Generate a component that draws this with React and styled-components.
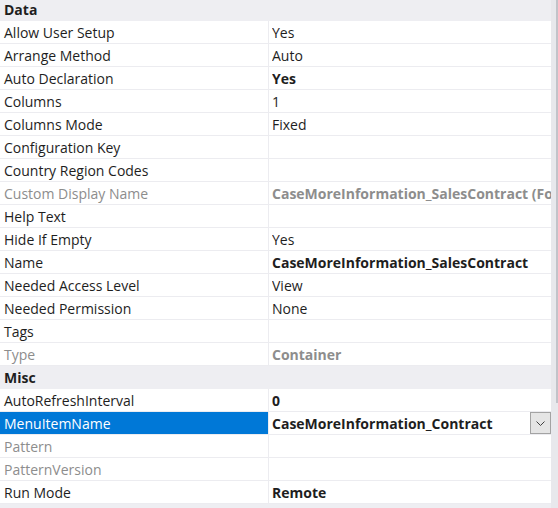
import React from "react";
import styled, { createGlobalStyle } from "styled-components";

const Global = createGlobalStyle`
  html, body { margin: 0; padding: 0; background: #ffffff; }
  body { font-family: "Open Sans", "Noto Sans", sans-serif; }
`;

const Frame = styled.div`
  width: 558px;
  height: 508px;
  overflow: hidden;
  display: flex;
  background: #eeeef2;
`;

const Grid = styled.div`
  width: 551px;
  display: flex;
  flex-direction: column;
  margin-top: -2px;
`;

const Scrollbar = styled.div`
  width: 7px;
  display: flex;
  justify-content: flex-end;
  background: #e8e8ec;
`;

const Thumb = styled.div`
  width: 2px;
  height: 403px;
  background: #c2c3c9;
`;

const Category = styled.div`
  height: 23px;
  display: flex;
  align-items: center;
  padding-left: 4px;
  background: #eeeef2;
  font-size: 14px;
  font-weight: 700;
  color: #1e1e1e;
`;

const Row = styled.div`
  height: 22px;
  display: grid;
  grid-template-columns: 269px 1fr;
  border-bottom: 1px solid #ececf0;
  background: #ffffff;
`;

const Label = styled.div`
  display: flex;
  align-items: center;
  padding-left: 4px;
  font-size: 14px;
  white-space: nowrap;
  overflow: hidden;
  color: ${(p) => (p.$selected ? "#ffffff" : p.$disabled ? "#8d8d8d" : "#1e1e1e")};
  background: ${(p) => (p.$selected ? "#0078d7" : "#ffffff")};
  border-right: 1px solid #ececf0;
`;

const Value = styled.div`
  display: flex;
  align-items: center;
  padding-left: 3px;
  font-size: 14px;
  white-space: nowrap;
  overflow: hidden;
  font-weight: ${(p) => (p.$bold ? 700 : 400)};
  color: ${(p) => (p.$disabled ? "#8d8d8d" : "#1e1e1e")};
`;

const ValueText = styled.span`
  flex: 1;
  overflow: hidden;
`;

const DropButton = styled.div`
  width: 19px;
  height: 20px;
  flex: none;
  display: flex;
  align-items: center;
  justify-content: center;
  background: #e5e5e5;
  border: 1px solid #a3a3a3;
`;

const data = [
  { label: "Allow User Setup", value: "Yes" },
  { label: "Arrange Method", value: "Auto" },
  { label: "Auto Declaration", value: "Yes", bold: true },
  { label: "Columns", value: "1" },
  { label: "Columns Mode", value: "Fixed" },
  { label: "Configuration Key", value: "" },
  { label: "Country Region Codes", value: "" },
  { label: "Custom Display Name", value: "CaseMoreInformation_SalesContract (Form)", bold: true, disabled: true },
  { label: "Help Text", value: "" },
  { label: "Hide If Empty", value: "Yes" },
  { label: "Name", value: "CaseMoreInformation_SalesContract", bold: true },
  { label: "Needed Access Level", value: "View" },
  { label: "Needed Permission", value: "None" },
  { label: "Tags", value: "" },
  { label: "Type", value: "Container", bold: true, disabled: true, labelDisabled: true },
];

const misc = [
  { label: "AutoRefreshInterval", value: "0", bold: true },
  { label: "MenuItemName", value: "CaseMoreInformation_Contract", bold: true, selected: true },
  { label: "Pattern", value: "", labelDisabled: true },
  { label: "PatternVersion", value: "", labelDisabled: true },
  { label: "Run Mode", value: "Remote", bold: true },
];

function Prop({ item }) {
  return (
    <Row>
      <Label $selected={item.selected} $disabled={item.labelDisabled || item.disabled}>
        {item.label}
      </Label>
      <Value $bold={item.bold} $disabled={item.disabled}>
        <ValueText>{item.value}</ValueText>
        {item.selected && (
          <DropButton>
            <svg width="9" height="5" viewBox="0 0 9 5">
              <path d="M0.5 0.5 L4.5 4.5 L8.5 0.5" fill="none" stroke="#404040" strokeWidth="1" />
            </svg>
          </DropButton>
        )}
      </Value>
    </Row>
  );
}

export default function App() {
  return (
    <>
      <Global />
      <Frame>
        <Grid>
          <Category>Data</Category>
          {data.map((d) => (
            <Prop key={d.label} item={d} />
          ))}
          <Category>Misc</Category>
          {misc.map((d) => (
            <Prop key={d.label} item={d} />
          ))}
        </Grid>
        <Scrollbar>
          <Thumb />
        </Scrollbar>
      </Frame>
    </>
  );
}
